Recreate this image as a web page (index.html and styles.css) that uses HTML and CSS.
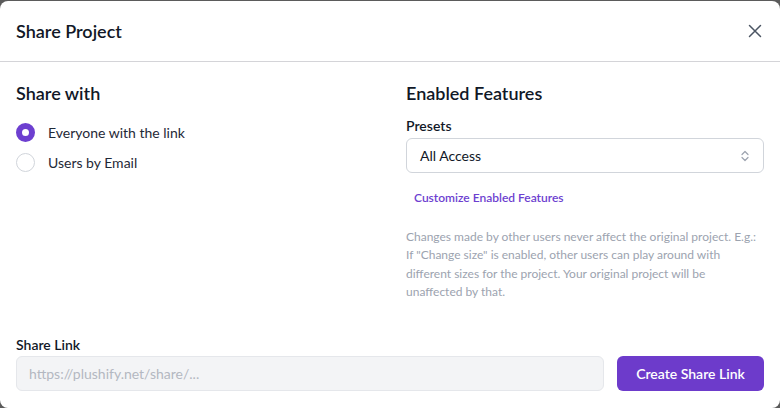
FILE: index.html
```html
<!DOCTYPE html>
<html lang="en">
<head>
    <meta charset="UTF-8">
    <meta name="viewport" content="width=device-width, initial-scale=1.0">
    <title>Share Project</title>
    <link rel="stylesheet" href="styles.css">
</head>
<body>
    <div class="modal">
        <div class="modal-header">
            <h2>Share Project</h2>
            <button class="close-btn" aria-label="Close">
                <svg width="14" height="14" viewBox="0 0 14 14"><path d="M1.5 1.5 L12.5 12.5 M12.5 1.5 L1.5 12.5" stroke="#4b5563" stroke-width="1.5" stroke-linecap="round"/></svg>
            </button>
        </div>

        <div class="modal-body">
            <div class="columns">
                <!-- 왼쪽: 공유 대상 -->
                <div class="column">
                    <h3>Share with</h3>
                    <label class="radio-row">
                        <span class="radio checked"></span>
                        Everyone with the link
                    </label>
                    <label class="radio-row">
                        <span class="radio"></span>
                        Users by Email
                    </label>
                </div>

                <!-- 오른쪽: 기능 설정 -->
                <div class="column">
                    <h3>Enabled Features</h3>
                    <div class="field-label">Presets</div>
                    <div class="select">
                        <span>All Access</span>
                        <svg width="8" height="12" viewBox="0 0 8 12"><path d="M1 4.5 L4 1.5 L7 4.5 M1 7.5 L4 10.5 L7 7.5" fill="none" stroke="#9ca3af" stroke-width="1.2" stroke-linecap="round" stroke-linejoin="round"/></svg>
                    </div>
                    <a class="customize" href="#">Customize Enabled Features</a>
                    <p class="note">Changes made by other users never affect the original project. E.g.: If "Change size" is enabled, other users can play around with different sizes for the project. Your original project will be unaffected by that.</p>
                </div>
            </div>

            <div class="field-label link-label">Share Link</div>
            <div class="link-row">
                <input class="link-input" type="text" placeholder="https://plushify.net/share/..." disabled>
                <button class="create-btn">Create Share Link</button>
            </div>
        </div>
    </div>
</body>
</html>
```

FILE: styles.css
```css
/* 전체 배경 */
body {
    margin: 0;
    background-color: #5b5b5b;
    font-family: "Lato", "Noto Sans", sans-serif;
    color: #111827;
}

/* 모달 박스 */
.modal {
    margin-top: 1px;
    height: 407px;
    background: #fff;
    border-radius: 8px;
    box-sizing: border-box;
}

.modal-header {
    display: flex;
    justify-content: space-between;
    align-items: center;
    height: 60px;
    padding: 0 16px;
    border-bottom: 1px solid #d4d4d8;
}

.modal-header h2 {
    margin: 0;
    font-size: 18px;
    font-weight: 600;
}

.close-btn {
    border: none;
    background: none;
    padding: 0;
    width: 14px; height: 14px;
    margin-right: 2px;
    cursor: pointer;
}

.modal-body {
    padding: 0 16px;
}

/* 두 칸 나누기 */
.columns {
    display: grid;
    grid-template-columns: 1fr 1fr;
    column-gap: 32px;
    height: 274px;
}

.column h3 {
    margin: 19px 0 12px;
    font-size: 18px;
    font-weight: 600;
    line-height: 24px;
}

.radio-row {
    display: flex;
    align-items: center;
    gap: 13px;
    height: 30px;
    font-size: 14px;
    color: #1f2937;
}

.radio {
    width: 19px; height: 19px;
    border-radius: 50%;
    border: 1px solid #d1d5db;
    box-sizing: border-box;
    background: #fff;
}

.radio.checked {
    border: 6px solid #6d3fd0;
}

.field-label {
    font-size: 14px;
    font-weight: 600;
    line-height: 18px;
    margin-bottom: 3px;
}

.link-label {
    margin-bottom: 2px;
}

.select {
    display: flex;
    justify-content: space-between;
    align-items: center;
    height: 35px;
    padding: 0 14px 0 13px;
    border: 1px solid #d1d5db;
    border-radius: 6px;
    box-sizing: border-box;
    font-size: 14px;
}

.customize {
    display: inline-block;
    margin: 17px 0 0 8px;
    font-size: 12px;
    font-weight: 600;
    color: #6d3fd0;
    text-decoration: none;
}

.note {
    margin: 23px 0 0;
    font-size: 12px;
    line-height: 18.3px;
    color: #9ca3af;
}

/* 공유 링크 줄 */
.link-row {
    display: flex;
    gap: 13px;
}

.link-input {
    flex: 1;
    height: 35px;
    box-sizing: border-box;
    padding: 0 12px;
    background: #f3f4f6;
    border: 1px solid #e5e7eb;
    border-radius: 6px;
    font-family: inherit;
    font-size: 14px;
}

.link-input::placeholder {
    color: #b3b8c1;
}

.create-btn {
    width: 147px; height: 35px;
    border: none;
    border-radius: 6px;
    background: #6d3bcb;
    color: #fff;
    font-family: inherit;
    font-size: 14px;
    font-weight: 600;
}
```
